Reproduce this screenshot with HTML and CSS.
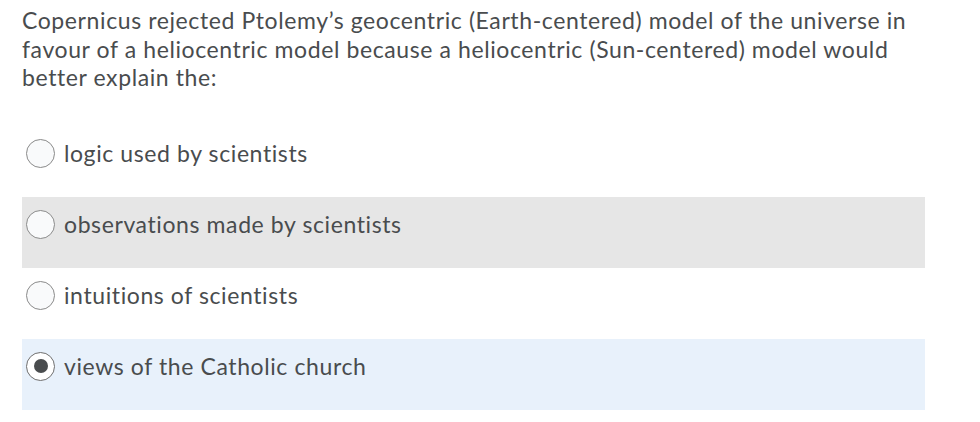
FILE: index.html
```html
<!DOCTYPE html>
<html>
<head>
<meta charset="utf-8">
<link rel="stylesheet" href="styles.css">
</head>
<body>
<div class="quiz">
  <p class="question">Copernicus rejected Ptolemy’s geocentric (Earth-centered) model of the universe in favour of a heliocentric model because a heliocentric (Sun-centered) model would better explain the:</p>
  <div class="options">
    <div class="option"><span class="radio"></span><span class="label">logic used by scientists</span></div>
    <div class="option hover"><span class="radio"></span><span class="label">observations made by scientists</span></div>
    <div class="option"><span class="radio"></span><span class="label">intuitions of scientists</span></div>
    <div class="option selected"><span class="radio checked"></span><span class="label">views of the Catholic church</span></div>
  </div>
</div>
</body>
</html>
```
FILE: styles.css
```css
html, body {
  margin: 0;
  padding: 0;
  background: #ffffff;
}
body {
  font-family: Lato, "Open Sans", sans-serif;
  color: #494c4e;
  font-variant-ligatures: none;
  letter-spacing: 0.6px;
}
.quiz {
  padding: 6px 0 0 22px;
  width: 903px;
}
.question {
  margin: 0;
  font-size: 23px;
  line-height: 28.5px;
  width: 903px;
}
.options {
  margin-top: 34px;
  display: flex;
  flex-direction: column;
}
.option {
  box-sizing: border-box;
  height: 71px;
  display: flex;
  align-items: flex-start;
  padding: 13px 0 0 4px;
  gap: 9px;
  font-size: 23px;
}
.option.hover {
  background: #e6e6e6;
}
.option.selected {
  background: #e8f1fb;
}
.radio {
  box-sizing: border-box;
  width: 29px;
  height: 29px;
  border-radius: 50%;
  border: 1px solid #8a8a8a;
  background: #f9fafb;
  display: flex;
  align-items: center;
  justify-content: center;
  flex-shrink: 0;
}
.radio.checked {
  border-color: #6e6e6e;
  background: #ffffff;
}
.radio.checked::after {
  content: "";
  width: 14px;
  height: 14px;
  border-radius: 50%;
  background: #494c4e;
}
.label {
  line-height: 28px;
}
```
